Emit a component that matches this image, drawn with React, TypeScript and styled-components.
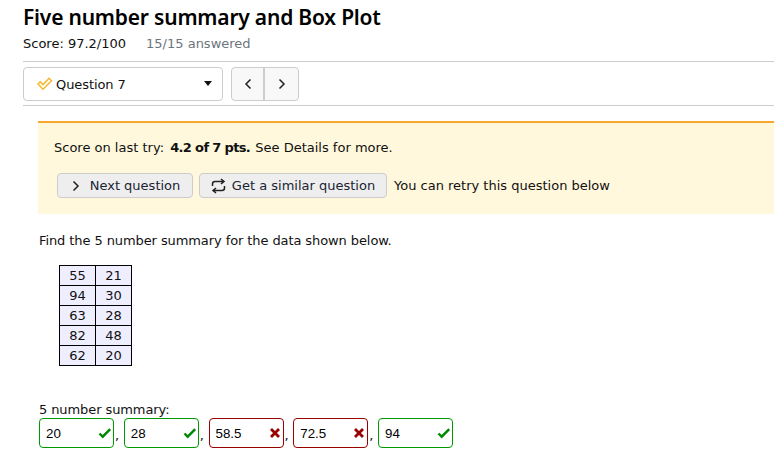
import React from "react";
import styled, { createGlobalStyle } from "styled-components";

const Global = createGlobalStyle`
  html, body { margin: 0; padding: 0; background: #fff; overflow: hidden; }
  body { font-family: "DejaVu Sans", Verdana, sans-serif; color: #111; font-size: 13px; letter-spacing: -0.09px; }
`;
const Page = styled.div`
  width: 774px; height: 457px; overflow: hidden; padding: 4px 0 0 23px; box-sizing: border-box;
  display: flex; flex-direction: column;
`;
const Title = styled.h1`
  margin: -1px 0 0; font-family: "Noto Sans", sans-serif; font-size: 21px; line-height: 28px; font-weight: 600; color: #000; white-space: nowrap; letter-spacing: -0.2px;
`;
const ScoreLine = styled.div`
  display: flex; gap: 20px; margin-top: 4px; line-height: 18px; letter-spacing: 0;
`;
const Answered = styled.span`color: #6c757d;`;
const NavBar = styled.div`
  margin-top: 8px; height: 43px; border-top: 1px solid #ccc; border-bottom: 1px solid #ccc;
  display: flex; align-items: center; gap: 8px;
`;
const Select = styled.div`
  width: 200px; height: 34px; box-sizing: border-box; border: 1px solid #ccc; border-radius: 4px;
  display: flex; align-items: center; padding: 0 10px 0 13px; gap: 3px;
`;
const SelectLabel = styled.span`padding-top: 1px;`;
const Caret = styled.span`
  margin-left: auto; width: 0; height: 0; border-left: 4px solid transparent; border-right: 4px solid transparent; border-top: 5px solid #111;
`;
const Pager = styled.div`
  display: flex; height: 34px; box-sizing: border-box; border: 1px solid #ccc; border-radius: 4px; background: #f8f8f8;
`;
const PageBtn = styled.div<{ $divided?: boolean }>`
  width: 33px; box-sizing: border-box; display: flex; align-items: center; justify-content: center;
  ${p => p.$divided ? "border-right: 2px solid #ccc;" : ""}
`;
const Callout = styled.div`
  margin: 15px 0 0 15px; height: 93px; background: #fff8dc; border-top: 2px solid #faa732; padding: 15px 0 0 16px;
  box-sizing: border-box; flex: none; letter-spacing: 0;
`;
const CalloutText = styled.div`line-height: 20px;`;
const Strong = styled.b`letter-spacing: -0.65px; margin: 0 1px 0 2px;`;
const Actions = styled.div`
  display: flex; align-items: center; margin: 15px 0 0 3px; gap: 6px; white-space: nowrap;
`;
const Action = styled.div<{ $w: number; $gap: number }>`
  width: ${p => p.$w}px; height: 25px; box-sizing: border-box; border: 1px solid #ccc; border-radius: 4px; background: #eee;
  display: flex; align-items: center; justify-content: center; gap: ${p => p.$gap}px; color: #1a2433;
`;
const Retry = styled.span`margin-left: 1px;`;
const Prompt = styled.p`
  margin: 17px 0 0 16px; line-height: 20px;
`;
const DataTable = styled.table`
  margin: 14px 0 0 36px; border-collapse: collapse; background: #eeeeff; align-self: flex-start;
  td { border: 1px solid #000; width: 35px; height: 19px; padding: 0; text-align: center; line-height: 19px; }
`;
const Label = styled.div`
  margin: 36px 0 0 16px; line-height: 15px;
`;
const Answers = styled.div`display: flex; margin: 1px 0 0 16px; align-items: flex-end;`;
const Answer = styled.div<{ $ok: boolean }>`
  width: 75px; height: 30px; box-sizing: border-box; border: 1px solid ${p => p.$ok ? "#090" : "#900"}; border-radius: 4px;
  display: flex; align-items: center; justify-content: space-between; padding: 0 0 0 6px;
  font-family: "Liberation Sans", Arial, sans-serif; font-size: 13.33px; letter-spacing: 0; color: #000;
`;
const Comma = styled.span`width: 9.75px; padding-left: 1px; box-sizing: border-box; line-height: 16px; margin-bottom: 4px;`;

const Check = () => (
  <svg width="18" height="18" viewBox="0 0 18 18"><path d="M4.500 9.500l3.200 3.200 7.500-7.500" fill="none" stroke="#080" strokeWidth="2.400" /></svg>
);
const Cross = () => (
  <svg width="18" height="18" viewBox="0 0 18 18"><path d="M6 5l8 8M14 5l-8 8" fill="none" stroke="#900" strokeWidth="2.800" /></svg>
);
const Chev = ({ left }: { left?: boolean }) => (
  <svg width="12" height="12" viewBox="0 0 12 12"><path d={left ? "M8.500 1.500L4 6l4.500 4.500" : "M3.500 1.500L8 6l-4.500 4.500"} fill="none" stroke="#222" strokeWidth="1.500" /></svg>
);
const DoubleCheck = () => (
  <svg width="16" height="13" viewBox="0 0 16 13"><path d="M1 7l2.200-2.200 2.800 2.800L12 1.300l2.500 2.500L6 12.200z" fill="#fff" stroke="#f5b82e" strokeWidth="1.500" /></svg>
);
const Retweet = () => (
  <svg width="15" height="16" viewBox="0 0 15 16"><path d="M1.500 8V6q0-2.500 2.500-2.500h9M10 1l3 2.500-3 2.500M13.500 8v2q0 2.500-2.500 2.500H2M5 10l-3 2.500L5 15" fill="none" stroke="#222" strokeWidth="1.500" /></svg>
);

const rows = [[55, 21], [94, 30], [63, 28], [82, 48], [62, 20]];
const answers = [["20", true], ["28", true], ["58.5", false], ["72.5", false], ["94", true]] as const;

export default function App() {
  return (
    <Page>
      <Global />
      <Title>Five number summary and Box Plot</Title>
      <ScoreLine><span>Score: 97.2/100</span><Answered>15/15 answered</Answered></ScoreLine>
      <NavBar>
        <Select><DoubleCheck /><SelectLabel>Question 7</SelectLabel><Caret /></Select>
        <Pager><PageBtn $divided><Chev left /></PageBtn><PageBtn><Chev /></PageBtn></Pager>
      </NavBar>
      <Callout>
        <CalloutText>Score on last try: <Strong>4.2 of 7 pts.</Strong> See Details for more.</CalloutText>
        <Actions>
          <Action $w={136} $gap={8}><Chev /><span>Next question</span></Action>
          <Action $w={188} $gap={6}><Retweet /><span>Get a similar question</span></Action>
          <Retry>You can retry this question below</Retry>
        </Actions>
      </Callout>
      <Prompt>Find the 5 number summary for the data shown below.</Prompt>
      <DataTable><tbody>{rows.map(r => <tr key={r[0]}>{r.map(c => <td key={c}>{c}</td>)}</tr>)}</tbody></DataTable>
      <Label>5 number summary:</Label>
      <Answers>
        {answers.map(([v, ok], i) => (
          <React.Fragment key={v}>
            {i > 0 && <Comma>,</Comma>}
            <Answer $ok={ok}><span>{v}</span>{ok ? <Check /> : <Cross />}</Answer>
          </React.Fragment>
        ))}
      </Answers>
    </Page>
  );
}
